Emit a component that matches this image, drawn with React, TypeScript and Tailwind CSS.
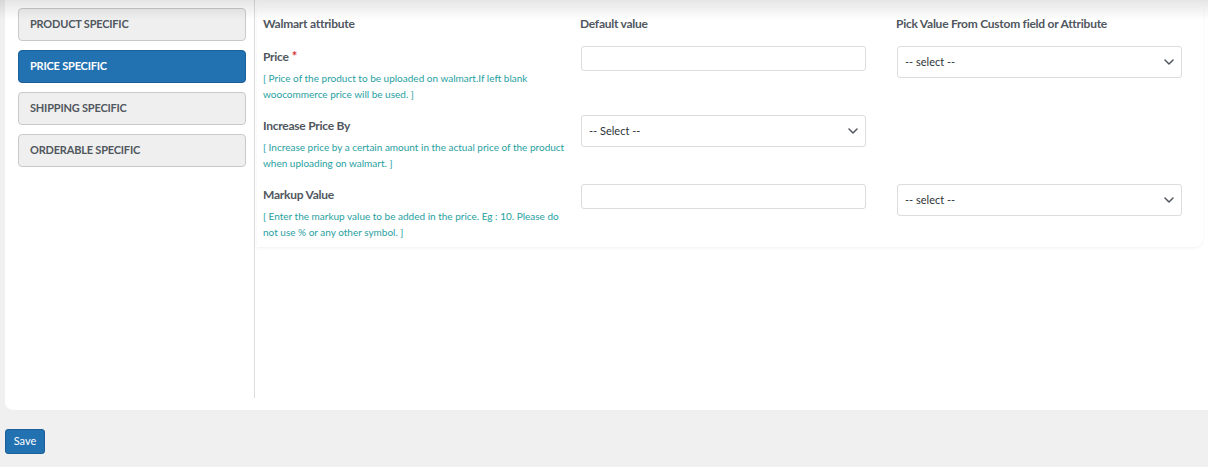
const tabs = [
    { label: "Product Specific", active: false },
    { label: "Price Specific", active: true },
    { label: "Shipping Specific", active: false },
    { label: "Orderable Specific", active: false },
];

function SelectBox({ text }: { text: string }) {
    return (
        <div className="flex h-[32px] w-[285px] items-center justify-between rounded-[3px] border border-[#dcdcde] bg-white pl-[7px] pr-[7px] text-[11px] text-[#2c3338]">
            <span>{text}</span>
            <svg width="10" height="6" viewBox="0 0 10 6" fill="none">
                <polyline points="1,1 5,5 9,1" stroke="#50575e" strokeWidth="1.5" strokeLinecap="round" strokeLinejoin="round" />
            </svg>
        </div>
    );
}

function TextBox() {
    return <div className="h-[25px] w-[285px] rounded-[3px] border border-[#dcdcde] bg-white" />;
}

interface RowProps {
    label: string;
    required?: boolean;
    hint: string;
    middle: React.ReactNode;
    right?: React.ReactNode;
}

function Row({ label, required, hint, middle, right }: RowProps) {
    return (
        <div className="grid grid-cols-[317px_316px_1fr] pb-[7px] pt-[6px]">
            <div className="pr-[12px]">
                <div className="h-[22px] text-[12px] font-bold leading-[22px] tracking-[-0.25px] text-[#50575e]">
                    {label}
                    {required && <span className="ml-[3px] text-[13px] leading-none text-[#d63638]">*</span>}
                </div>
                <p className="mt-[2px] text-[10px] leading-[16px] text-[#27a0a0]">{hint}</p>
            </div>
            <div className="pl-[1px]">{middle}</div>
            <div className="pl-[1px]">{right}</div>
        </div>
    );
}

export default function App() {
    return (
        <div
            className="relative h-[467px] w-full overflow-hidden bg-[#f0f0f1]"
            style={{ fontFamily: "Lato, 'Open Sans', sans-serif" }}
        >
            <div className="ml-[5px] flex h-[410px] rounded-bl-lg bg-white pb-[12px]">
                <div className="w-[250px] shrink-0 border-r border-[#dcdcde] pl-[13px] pr-[8px] pt-[8px]">
                    <div className="flex flex-col gap-[9px]">
                        {tabs.map((t) => (
                            <button
                                key={t.label}
                                className={`h-[33px] rounded-[4px] border pl-[11px] text-left text-[11px] font-bold uppercase tracking-[-0.2px] ${
                                    t.active
                                        ? "border-[#1d5f96] bg-[#2271b1] text-white"
                                        : "border-[#c9c9cb] bg-[#efefef] text-[#50575e]"
                                }`}
                            >
                                {t.label}
                            </button>
                        ))}
                    </div>
                </div>
                <div className="flex-1 pl-[2px] pr-[5px] pt-[8px]">
                    <div className="rounded-br-lg pl-[6px] shadow-[0_1px_3px_rgba(0,0,0,0.06)]">
                        <div className="grid h-[32px] grid-cols-[317px_316px_1fr] items-center text-[12px] font-bold tracking-[-0.25px] text-[#50575e]">
                            <span>Walmart attribute</span>
                            <span>Default value</span>
                            <span>Pick Value From Custom field or Attribute</span>
                        </div>
                        <Row
                            label="Price"
                            required
                            hint="[ Price of the product to be uploaded on walmart.If left blank woocommerce price will be used. ]"
                            middle={<TextBox />}
                            right={<SelectBox text="-- select --" />}
                        />
                        <Row
                            label="Increase Price By"
                            hint="[ Increase price by a certain amount in the actual price of the product when uploading on walmart. ]"
                            middle={<SelectBox text="-- Select --" />}
                        />
                        <Row
                            label="Markup Value"
                            hint="[ Enter the markup value to be added in the price. Eg : 10. Please do not use % or any other symbol. ]"
                            middle={<TextBox />}
                            right={<SelectBox text="-- select --" />}
                        />
                    </div>
                </div>
            </div>
            <div className="pl-[5px] pt-[17px]">
                <button className="h-[25px] w-[40px] rounded-[3px] border border-[#1d5f96] bg-[#2271b1] text-[11px] text-white">
                    Save
                </button>
            </div>
            <div className="pointer-events-none absolute inset-x-0 top-0 h-[20px] bg-gradient-to-b from-[rgba(0,0,0,0.1)] to-transparent" />
        </div>
    );
}
